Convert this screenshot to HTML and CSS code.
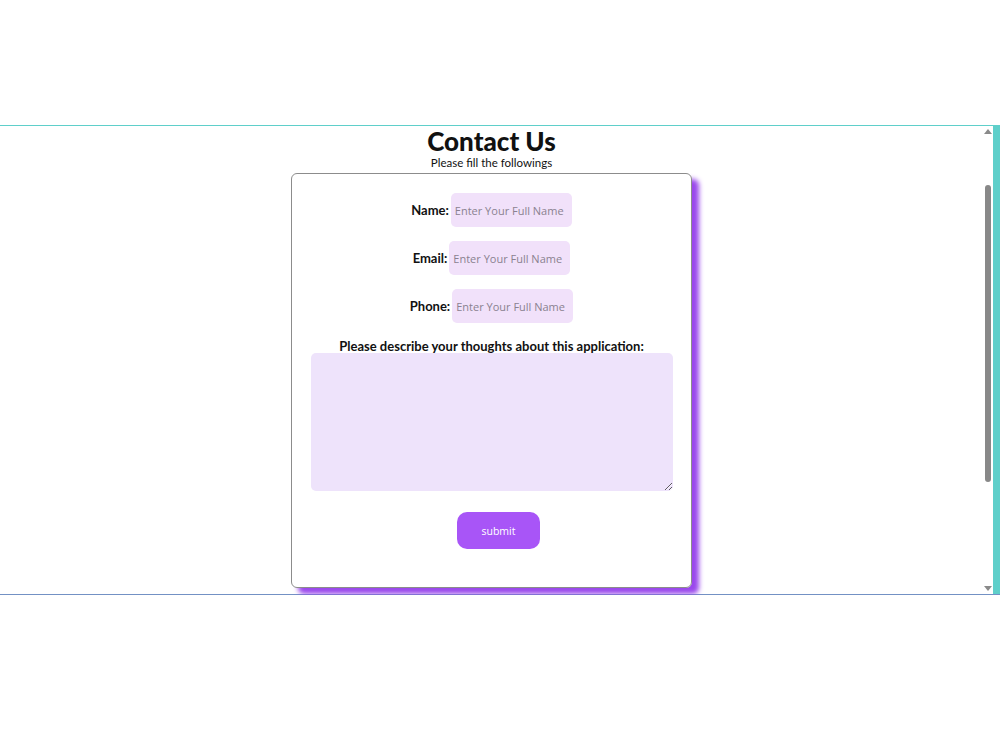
FILE: index.html
```html
<!DOCTYPE html>
<html lang="en">
<head>
    <meta charset="UTF-8">
    <meta name="viewport" content="width=device-width, initial-scale=1.0">
    <title>Contact Us</title>
    <link rel="stylesheet" href="styles.css">
</head>
<body>
    <div class="frame">
        <div class="frame-content">
            <h1>Contact Us</h1>
            <p class="subtitle">Please fill the followings</p>

            <form class="contact-card">
                <div class="row">
                    <label for="name">Name:</label>
                    <input type="text" id="name" placeholder="Enter Your Full Name">
                </div>
                <div class="row">
                    <label for="email">Email:</label>
                    <input type="text" id="email" placeholder="Enter Your Full Name">
                </div>
                <div class="row">
                    <label for="phone">Phone:</label>
                    <input type="text" id="phone" placeholder="Enter Your Full Name">
                </div>
                <label class="thoughts-label" for="thoughts">Please describe your thoughts about this application:</label>
                <textarea id="thoughts"></textarea>
                <button type="button" class="submit-btn">submit</button>
            </form>
        </div>

        <div class="scrollbar">
            <span class="arrow up"></span>
            <div class="track"><div class="thumb"></div></div>
            <span class="arrow down"></span>
        </div>
        <div class="edge"></div>
    </div>
</body>
</html>
```

FILE: styles.css
```css
body {
    margin: 0;
    padding: 0;
    background-color: #fff;
    font-family: "Lato", "Open Sans", sans-serif;
}
.frame {
    margin-top: 125px;
    height: 468px;
    display: flex;
    border-top: 1px solid #5fcfca;
    border-bottom: 1px solid #7391c4;
}
.frame-content {
    flex: 1;
    display: flex;
    flex-direction: column;
    align-items: center;
}
.frame-content h1 {
    margin: 0;
    font-size: 26px;
    line-height: 30px;
    font-weight: 900;
    color: #111;
}
.subtitle {
    margin: 0;
    font-size: 11.5px;
    line-height: 13px;
    color: #111;
}
.contact-card {
    box-sizing: border-box;
    width: 401px;
    margin-top: 4px;
    padding: 19px 19px 38px;
    border: 1px solid #8c8c8c;
    border-radius: 6px;
    box-shadow: 7px 6px 5px #9a48ec;
    display: flex;
    flex-direction: column;
    align-items: center;
}
.row {
    display: flex;
    align-items: center;
    gap: 2px;
    margin-bottom: 14px;
}
.row label,
.thoughts-label {
    font-size: 13px;
    font-weight: 700;
    color: #111;
}
.row input {
    box-sizing: border-box;
    width: 121px;
    height: 34px;
    padding: 0 4px;
    border: none;
    border-radius: 5px;
    background-color: #f1e1fa;
    font-family: "Open Sans", sans-serif;
    font-size: 11px;
    outline: none;
}
.row input::placeholder {
    color: #8a8290;
}
.thoughts-label {
    margin-top: 2px;
    line-height: 14px;
}
.contact-card textarea {
    box-sizing: border-box;
    width: 362px;
    height: 138px;
    margin-top: 0;
    border: none;
    border-radius: 5px;
    background-color: #eee3fb;
    resize: vertical;
}
.submit-btn {
    width: 83px;
    height: 37px;
    margin: 21px 0 0 14px;
    border: none;
    border-radius: 10px;
    background-color: #a855f7;
    color: #fff;
    font-family: "Open Sans", sans-serif;
    font-size: 10.5px;
    cursor: pointer;
}
.scrollbar {
    width: 10px;
    display: flex;
    flex-direction: column;
    align-items: center;
    background-color: #fff;
}
.arrow {
    width: 0;
    height: 0;
    border-left: 4px solid transparent;
    border-right: 4px solid transparent;
    margin: 3px 0;
}
.arrow.up {
    border-bottom: 5px solid #8a8a8a;
}
.arrow.down {
    border-top: 5px solid #8a8a8a;
}
.track {
    flex: 1;
    width: 100%;
    display: flex;
    justify-content: center;
}
.thumb {
    width: 6px;
    height: 297px;
    margin-top: 48px;
    border-radius: 3px;
    background-color: #888;
}
.edge {
    width: 7px;
    background-color: #5fcfca;
}
```
